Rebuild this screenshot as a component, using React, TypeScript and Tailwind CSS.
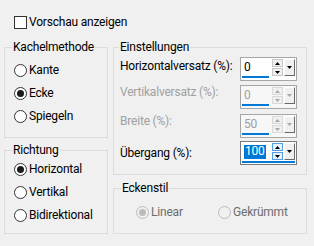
function UpArrow({ color }: { color: string }) {
  return (
    <svg width="5" height="3" viewBox="0 0 5 3" className="block">
      <polygon points="0,3 5,3 2.5,0" fill={color} />
    </svg>
  );
}

function DownArrow({ color }: { color: string }) {
  return (
    <svg width="5" height="3" viewBox="0 0 5 3" className="block">
      <polygon points="0,0 5,0 2.5,3" fill={color} />
    </svg>
  );
}

function Spinner({
  value,
  disabled = false,
  focused = false,
}: {
  value: string;
  disabled?: boolean;
  focused?: boolean;
}) {
  const arrow = disabled ? "#a8a8a8" : "#000000";
  return (
    <div
      className={
        "flex flex-col h-[24px] w-[57px] border " +
        (focused ? "border-[#7a7a7a] " : "border-[#a6a6a6] ") +
        (disabled ? "bg-[#f7f7f7]" : "bg-white")
      }
    >
      <div className="flex h-[18px] pt-[1px]">
        <div className={"w-[31px] pl-[3px] pt-[1px] leading-[15px] " + (disabled ? "text-[#a0a0a0]" : "text-black")}>
          {focused ? <span className="bg-[#0078d7] text-white px-[1px] inline-block leading-[13px] pb-[1px]">{value}</span> : value}
        </div>
        <div className="flex flex-col w-[11px] h-[17px] gap-[1px]">
          <div
            className={
              "flex items-center justify-center h-[8px] border " +
              (focused ? "border-[#569de5] bg-[#e5f1fb]" : disabled ? "border-[#d9d9d9] bg-[#f0f0f0]" : "border-[#c7c7c7] bg-[#f0f0f0]")
            }
          >
            <UpArrow color={arrow} />
          </div>
          <div
            className={
              "flex items-center justify-center h-[8px] border " +
              (focused ? "border-[#569de5] bg-[#e5f1fb]" : disabled ? "border-[#d9d9d9] bg-[#f0f0f0]" : "border-[#c7c7c7] bg-[#f0f0f0]")
            }
          >
            <DownArrow color={arrow} />
          </div>
        </div>
        <div className="ml-[1px] flex items-center justify-center w-[11px] h-[17px] bg-[#f0f0f0] border-l border-t border-l-white border-t-white border-r border-b border-r-[#696969] border-b-[#696969]">
          <DownArrow color={arrow} />
        </div>
      </div>
      <div className={"h-[2px] bg-[#0078d7] ml-[1px] " + (focused ? "w-[53px] mt-[1px]" : "w-[27px]")} />
    </div>
  );
}

function Radio({
  label,
  checked = false,
  disabled = false,
}: {
  label: string;
  checked?: boolean;
  disabled?: boolean;
}) {
  return (
    <div className="flex items-center h-[23px]">
      <div
        className={
          "flex items-center justify-center w-[13px] h-[13px] rounded-full border " +
          (disabled ? "border-[#bcbcbc] bg-[#f0f0f0]" : "border-[#333333] bg-white")
        }
      >
        {checked && (
          <div className={"w-[7px] h-[7px] rounded-full " + (disabled ? "bg-[#bcbcbc]" : "bg-[#1a1a1a]")} />
        )}
      </div>
      <span className={"ml-[2px] " + (disabled ? "text-[#6d6d6d]" : "text-black")}>{label}</span>
    </div>
  );
}

export default function App() {
  return (
    <div className="w-[314px] h-[246px] bg-[#f0f0f0] text-[12px] leading-[15px] tracking-[-0.2px] text-black font-['Roboto','Noto_Sans',sans-serif] overflow-hidden">
      <div className="flex items-center pt-[15px] pl-[14px]">
        <div className="w-[13px] h-[13px] border border-[#333333] bg-white" />
        <span className="ml-[2px]">Vorschau anzeigen</span>
      </div>

      <div className="flex gap-[5px] pl-[4px] mt-[10px]">
        <div className="flex flex-col w-[104px]">
          <fieldset className="h-[98px] border border-[#dcdcdc] pl-[9px]">
            <legend className="-ml-[2px] px-[1px]">Kachelmethode</legend>
            <div className="pt-[4px]">
              <Radio label="Kante" />
              <Radio label="Ecke" checked />
              <Radio label="Spiegeln" />
            </div>
          </fieldset>
          <fieldset className="mt-[5px] h-[91px] border border-[#dcdcdc] pl-[9px]">
            <legend className="-ml-[2px] px-[1px]">Richtung</legend>
            <div>
              <Radio label="Horizontal" checked />
              <Radio label="Vertikal" />
              <Radio label="Bidirektional" />
            </div>
          </fieldset>
        </div>

        <div className="flex flex-col w-[194px]">
          <fieldset className="h-[135px] border border-[#dcdcdc] pl-[6px] pr-[9px]">
            <legend className="-ml-[1px] px-[1px]">Einstellungen</legend>
            <div className="flex flex-col">
              <div className="flex items-center justify-between mt-[2px]">
                <span className="mb-[6px]">Horizontalversatz (%):</span>
                <Spinner value="0" />
              </div>
              <div className="flex items-center justify-between mt-[4px]">
                <span className="mb-[9px] text-[#a0a0a0]">Vertikalversatz (%):</span>
                <Spinner value="0" disabled />
              </div>
              <div className="flex items-center justify-between mt-[5px]">
                <span className="mb-[9px] text-[#a0a0a0]">Breite (%):</span>
                <Spinner value="50" disabled />
              </div>
              <div className="flex items-center justify-between mt-[3px]">
                <span>Übergang (%):</span>
                <Spinner value="100" focused />
              </div>
            </div>
          </fieldset>
          <fieldset className="mt-[6px] h-[53px] border border-[#dcdcdc] pl-[8px]">
            <legend className="-ml-[1px] px-[1px]">Eckenstil</legend>
            <div className="flex pt-[5px] ml-[14px]">
              <div className="w-[82px]">
                <Radio label="Linear" checked disabled />
              </div>
              <Radio label="Gekrümmt" disabled />
            </div>
          </fieldset>
        </div>
      </div>
    </div>
  );
}
